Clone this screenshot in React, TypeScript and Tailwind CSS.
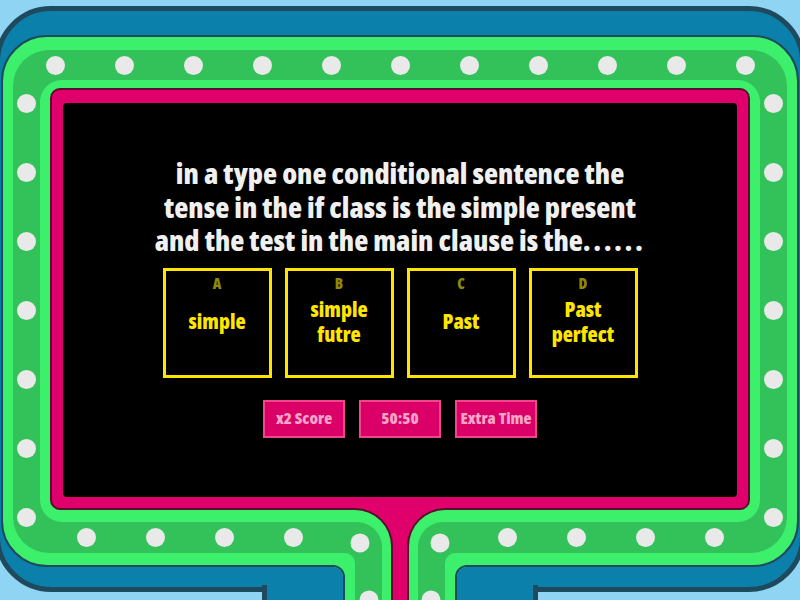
import React from "react";

const font = "font-['Open_Sans',sans-serif] [font-stretch:75%]";
const dot = "block w-[19px] h-[19px] shrink-0 rounded-full bg-[#e9e9e9]";

const NAVY = "#1f4a5d";
const BLUE = "#0a80aa";
const LIGHT = "#3df06c";
const DARK = "#33c25a";
const PINK = "#df006b";
const LINE = "#5b0d2e";
const DOT = "#e9e9e9";

function Dots({ n }: { n: number }) {
  return (
    <>
      {Array.from({ length: n }).map((_, i) => (
        <span key={i} className={dot} />
      ))}
    </>
  );
}

const answers = [
  { key: "A", lines: ["simple"] },
  { key: "B", lines: ["simple", "futre"] },
  { key: "C", lines: ["Past"] },
  { key: "D", lines: ["Past", "perfect"] },
];

const powerUps = ["x2 Score", "50:50", "Extra Time"];

// left half of the stand under the board; the right half is its mirror
function StandHalf() {
  return (
    <g>
      <path d="M320 508 H355 A38 38 0 0 1 393 546 V600 H320 Z" fill={LINE} />
      <path d="M320 510 H355 A36 36 0 0 1 391 546 V600 H320 Z" fill={LIGHT} />
      <path d="M320 522 H357 A25 25 0 0 1 382 547 V600 H355 V563 A10 10 0 0 0 345 553 H320 Z" fill={DARK} />
      <path d="M320 566 H333 A11 11 0 0 1 344 577 V600" stroke={NAVY} strokeWidth={2} fill="none" />
      <path d="M320 567 H333 A10 10 0 0 1 343 577 V600 H320 Z" fill={BLUE} />
      <circle cx={360} cy={543} r={9.5} fill={DOT} />
      <circle cx={369} cy={600} r={9.5} fill={DOT} />
    </g>
  );
}

export default function App() {
  return (
    <div className={`relative w-[800px] h-[600px] overflow-hidden bg-[#8fd4f2] pt-[6px] ${font}`}>
      {/* outer blue frame */}
      <div className="mx-[-5px] h-[586px] rounded-[56px] border-[5px] border-[#1f4a5d] bg-[#0a80aa] pt-[24px] pb-[20px] px-[1px] flex flex-col">
        {/* green light band */}
        <div className="flex-1 flex rounded-[46px] border-2 border-[#1f4a5d] bg-[#3df06c] pt-[13px] pb-[12px] px-[10px]">
          {/* dark band with bulbs */}
          <div className="flex-1 flex rounded-[36px] bg-[#33c25a]">
            <div className="w-[27px] flex flex-col items-center justify-between pt-[43.5px] pb-[26.5px]">
              <Dots n={7} />
            </div>
            <div className="flex-1 flex flex-col">
              <div className="h-[30px] flex items-center justify-between px-[5.5px]">
                <Dots n={11} />
              </div>
              <div className="flex-1 flex rounded-[22px] bg-[#3df06c] pt-[8px] pb-[12px] px-[10px]">
                <div className="flex-1 flex rounded-[10px] border-2 border-[#5b0d2e] bg-[#df006b] pt-[13px] pb-[11px] px-[11px]">
                  {/* screen */}
                  <div className="flex-1 flex flex-col items-center rounded-[4px] bg-black pt-[53px]">
                    <div className="text-center text-[29px] leading-[33.5px] font-extrabold text-[#f0f0f0]">
                      <div>in a type one conditional sentence the</div>
                      <div>tense in the if class is the simple present</div>
                      <div>
                        and the test in the main clause is the<span className="tracking-[2.5px]">......</span>
                      </div>
                    </div>

                    <div className="mt-[11px] flex gap-[13px]">
                      {answers.map((a) => (
                        <div
                          key={a.key}
                          className="grid w-[109px] h-[110px] border-[3px] border-[#ffe600] bg-black"
                        >
                          <span className="[grid-area:1/1] self-start justify-self-center mt-[3px] text-[15px] leading-[18px] font-extrabold text-[#8d8a05]">
                            {a.key}
                          </span>
                          <span className="[grid-area:1/1] self-center justify-self-center mb-[2px] text-center text-[21px] leading-[25px] font-extrabold text-[#ffe600]">
                            {a.lines.map((l) => (
                              <span key={l} className="block">
                                {l}
                              </span>
                            ))}
                          </span>
                        </div>
                      ))}
                    </div>

                    <div className="mt-[22px] flex gap-[14px]">
                      {powerUps.map((p) => (
                        <div
                          key={p}
                          className="w-[82px] h-[38px] flex items-center justify-center whitespace-nowrap border-2 border-[#f0468a] bg-[#db0067] text-[16.5px] font-extrabold text-[#f6a6c8]"
                        >
                          {p}
                        </div>
                      ))}
                    </div>
                  </div>
                </div>
              </div>
              <div className="h-[31px] flex items-center justify-between px-[36.5px]">
                <div className="flex gap-[50px]">
                  <Dots n={4} />
                </div>
                <div className="flex gap-[50px]">
                  <Dots n={4} />
                </div>
              </div>
            </div>
            <div className="w-[27px] flex flex-col items-center justify-between pt-[43.5px] pb-[26.5px]">
              <Dots n={7} />
            </div>
          </div>
        </div>
      </div>

      {/* stand base below the board */}
      <div className="absolute left-[262px] top-[585px] w-[276px] h-[15px] border-x-[5px] border-[#1f4a5d] bg-[#0a80aa]" />
      <svg
        className="absolute left-[320px] top-[497px]"
        width={160}
        height={103}
        viewBox="320 497 160 103"
      >
        <rect x={320} y={497} width={160} height={103} fill={PINK} />
        <StandHalf />
        <g transform="translate(800 0) scale(-1 1)">
          <StandHalf />
        </g>
      </svg>
    </div>
  );
}
